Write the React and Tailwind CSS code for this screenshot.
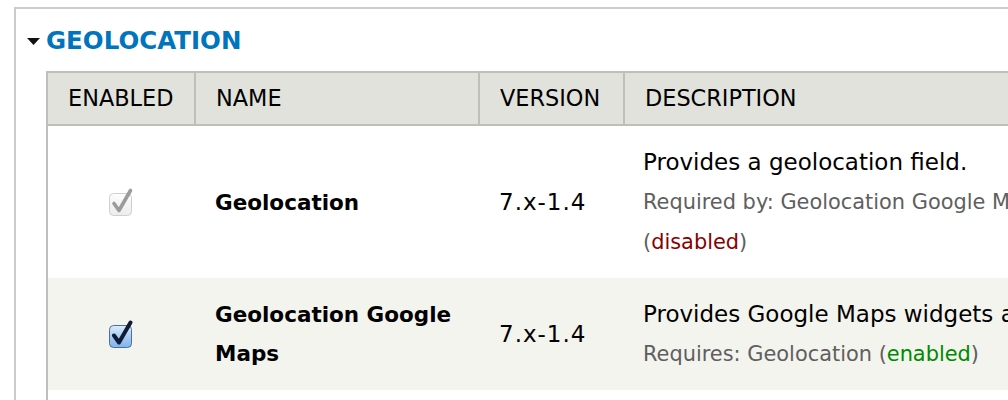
import React from 'react';

const Caret = () => (
    <svg width="13" height="7" viewBox="0 0 13 7" className="shrink-0">
        <path d="M0 0 L13 0 L6.5 7 Z" fill="#111" />
    </svg>
);

const Checkbox = ({ disabled }) => {
    if (disabled) {
        return (
            <svg width="26" height="29" viewBox="0 0 26 29">
                <defs>
                    <linearGradient id="cbOff" x1="0" y1="0" x2="0" y2="1">
                        <stop offset="0" stopColor="#fdfdfd" />
                        <stop offset="1" stopColor="#ececec" />
                    </linearGradient>
                </defs>
                <rect x="1.5" y="5.5" width="22" height="22" rx="4" fill="url(#cbOff)" stroke="#cfcfcf" />
                <path d="M6 15.5 L11 22.5 L22.5 2.5" fill="none" stroke="#9b9b9b" strokeWidth="3.6" strokeLinecap="round" strokeLinejoin="round" />
            </svg>
        );
    }
    return (
        <svg width="26" height="29" viewBox="0 0 26 29">
            <defs>
                <linearGradient id="cbOn" x1="0" y1="0" x2="0" y2="1">
                    <stop offset="0" stopColor="#dcecfc" />
                    <stop offset="0.5" stopColor="#a9cdf4" />
                    <stop offset="1" stopColor="#7db4ee" />
                </linearGradient>
            </defs>
            <rect x="1.5" y="5.5" width="22" height="22" rx="4" fill="url(#cbOn)" stroke="#4f6f95" />
            <path d="M6 15.5 L11 22.5 L22.5 2.5" fill="none" stroke="#0e1c38" strokeWidth="4" strokeLinecap="round" strokeLinejoin="round" />
        </svg>
    );
};

const modules = [
    {
        name: 'Geolocation',
        version: '7.x-1.4',
        description: 'Provides a geolocation field.',
        disabled: true,
        requirements: (
            <>
                Required by: Geolocation Google Maps (<span className="text-[#880000]">disabled</span>)
            </>
        ),
        rowClass: 'bg-white',
    },
    {
        name: 'Geolocation Google Maps',
        version: '7.x-1.4',
        description: 'Provides Google Maps widgets and formatters for Geolocation fields.',
        disabled: false,
        requirements: (
            <>
                Requires: Geolocation (<span className="text-[#008800]">enabled</span>)
            </>
        ),
        rowClass: 'bg-[#f3f4ee]',
    },
];

export default function App() {
    return (
        <div className="h-[400px] w-[1008px] overflow-hidden bg-white font-['DejaVu_Sans',sans-serif] text-black">
            <div className="ml-[14px] mt-[7px] w-[1300px] border-l-2 border-t-2 border-[#cccccc] pl-[30px]">
                <div className="flex items-center h-[62px] pt-[2px] -ml-[19px] gap-[6px]">
                    <Caret />
                    <span className="text-[24.5px] font-bold uppercase text-[#0074bd] leading-[30px]">Geolocation</span>
                </div>

                <div className="w-[1200px] border-l-2 border-t-2 border-[#bebfb9]">
                    <div className="flex bg-[#e1e2dc] border-b-2 border-[#bebfb9] text-[22.4px] leading-[39px] uppercase">
                        <div className="w-[148px] shrink-0 border-r-2 border-[#bebfb9] py-[6px] pl-[20px]">Enabled</div>
                        <div className="w-[284px] shrink-0 border-r-2 border-[#bebfb9] py-[6px] pl-[20px]">Name</div>
                        <div className="w-[145px] shrink-0 border-r-2 border-[#bebfb9] py-[6px] pl-[20px]">Version</div>
                        <div className="flex-1 py-[6px] pl-[20px]">Description</div>
                    </div>

                    {modules.map((m) => (
                        <div key={m.name} className={`flex ${m.rowClass}`}>
                            <div className="w-[148px] shrink-0 flex items-center justify-center pr-[2px]">
                                <Checkbox disabled={m.disabled} />
                            </div>
                            <div className="w-[284px] shrink-0 flex items-center pl-[19px] pr-[20px]">
                                <span className="text-[21.5px] font-bold leading-[39px]">{m.name}</span>
                            </div>
                            <div className="w-[145px] shrink-0 flex items-center pl-[19px]">
                                <span className="text-[23px] tracking-[1px] leading-[39px]">{m.version}</span>
                            </div>
                            <div className="flex-1 py-[16px] pl-[18px] whitespace-nowrap">
                                <div className="text-[23px] leading-[40px]">{m.description}</div>
                                <div className="text-[20.9px] leading-[40px] text-[#5f5f5f] whitespace-normal w-[420px]">
                                    {m.requirements}
                                </div>
                            </div>
                        </div>
                    ))}

                    <div className="h-[80px] bg-white" />
                </div>
            </div>
        </div>
    );
}
